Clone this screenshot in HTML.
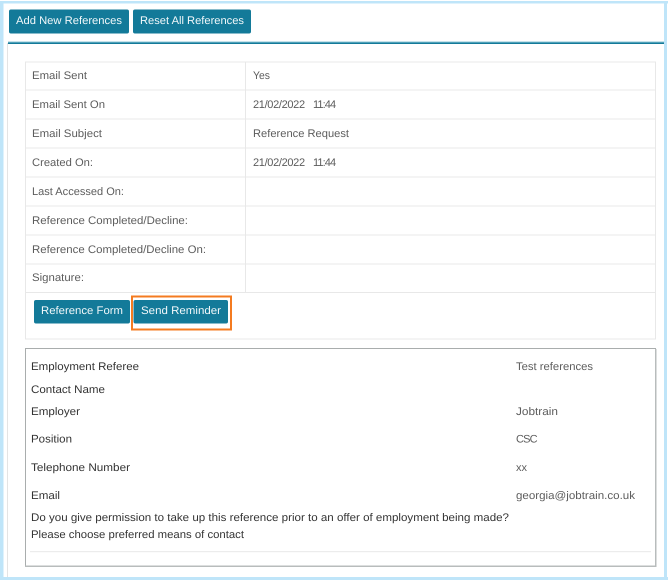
<!DOCTYPE html>
<html><head><meta charset="utf-8"><style>
html,body{margin:0;padding:0;background:#fff;width:668px;height:580px;overflow:hidden}
svg{display:block;filter:blur(.3px)}
text{font-family:"Liberation Sans",sans-serif;font-size:11px;text-rendering:geometricPrecision}
.l{fill:#5c5c5c}.d{fill:#333}.w{fill:#f2f8fa}
</style></head><body>
<svg width="668" height="580" viewBox="0 0 668 580" xmlns="http://www.w3.org/2000/svg">
<rect width="668" height="580" fill="#fff"/>
<rect x="0" y="1" width="3.5" height="579" fill="#bfe5f9"/>
<rect x="0" y="1" width="668" height="2.5" fill="#bfe5f9"/>
<rect x="664" y="1" width="3" height="579" fill="#bfe5f9"/>
<rect x="0" y="577" width="668" height="3" fill="#bfe5f9"/>
<rect x="7" y="43" width="1" height="534" fill="#e4e4e4"/>
<rect x="8" y="41.5" width="656" height="1" fill="#8cc6d6"/>
<rect x="8" y="42.5" width="656" height="1.5" fill="#137a99"/>

<rect x="9" y="9.5" width="120" height="24" rx="2" fill="#137a99"/>
<rect x="133" y="9.5" width="118" height="24" rx="2" fill="#137a99"/>
<text class="w" x="16" y="24" textLength="106" lengthAdjust="spacingAndGlyphs">Add New References</text>
<text class="w" x="140" y="24" textLength="104" lengthAdjust="spacingAndGlyphs">Reset All References</text>

<g fill="none" stroke="#e8e8e8" stroke-width="1">
<rect x="25.5" y="62" width="630" height="277"/>
<path d="M245.5 62V292.5M26 90H655M26 119H655M26 148H655M26 177H655M26 206H655M26 235H655M26 264H655M26 292.5H655"/>
</g>

<text class="l" x="32" y="79" textLength="55" lengthAdjust="spacingAndGlyphs">Email Sent</text>
<text class="l" x="253" y="79" textLength="17" lengthAdjust="spacingAndGlyphs">Yes</text>
<text class="l" x="32" y="108" textLength="73" lengthAdjust="spacingAndGlyphs">Email Sent On</text>
<text class="l" x="253" y="108" letter-spacing="-0.33">21/02/2022</text>
<text class="l" x="313" y="108" letter-spacing="-0.9">11:44</text>
<text class="l" x="32" y="137" textLength="70" lengthAdjust="spacingAndGlyphs">Email Subject</text>
<text class="l" x="253" y="137" textLength="96" lengthAdjust="spacingAndGlyphs">Reference Request</text>
<text class="l" x="32" y="166" textLength="61" lengthAdjust="spacingAndGlyphs">Created On:</text>
<text class="l" x="253" y="166" letter-spacing="-0.33">21/02/2022</text>
<text class="l" x="313" y="166" letter-spacing="-0.9">11:44</text>
<text class="l" x="32" y="195" textLength="92" lengthAdjust="spacingAndGlyphs">Last Accessed On:</text>
<text class="l" x="32" y="224" textLength="156" lengthAdjust="spacingAndGlyphs">Reference Completed/Decline:</text>
<text class="l" x="32" y="253" textLength="174" lengthAdjust="spacingAndGlyphs">Reference Completed/Decline On:</text>
<text class="l" x="32" y="281" textLength="52" lengthAdjust="spacingAndGlyphs">Signature:</text>

<rect x="34" y="300" width="96" height="23.5" rx="2" fill="#137a99"/>
<rect x="133.5" y="300" width="94.5" height="23.5" rx="2" fill="#137a99"/>
<rect x="132" y="296.5" width="99" height="33" fill="none" stroke="#f47b20" stroke-width="2"/>
<text class="w" x="41" y="314" textLength="82" lengthAdjust="spacingAndGlyphs">Reference Form</text>
<text class="w" x="141" y="314" textLength="80" lengthAdjust="spacingAndGlyphs">Send Reminder</text>

<rect x="25.5" y="348.5" width="630" height="217.5" fill="#fff" stroke="#a9adad" stroke-width="1"/>
<rect x="655" y="349" width="1.5" height="218" fill="#b8bcbc"/>
<rect x="25" y="565.5" width="631.5" height="1.5" fill="#b8bcbc"/>
<text class="d" x="31" y="370" textLength="108" lengthAdjust="spacingAndGlyphs">Employment Referee</text>
<text class="d" x="31" y="393" textLength="74" lengthAdjust="spacingAndGlyphs">Contact Name</text>
<text class="d" x="31" y="415" textLength="49" lengthAdjust="spacingAndGlyphs">Employer</text>
<text class="d" x="31" y="442.5" textLength="41" lengthAdjust="spacingAndGlyphs">Position</text>
<text class="d" x="31" y="471" textLength="99" lengthAdjust="spacingAndGlyphs">Telephone Number</text>
<text class="d" x="31" y="499" textLength="29" lengthAdjust="spacingAndGlyphs">Email</text>
<text class="d" x="31" y="521" textLength="478" lengthAdjust="spacingAndGlyphs">Do you give permission to take up this reference prior to an offer of employment being made?</text>
<text class="d" x="31" y="538" textLength="213" lengthAdjust="spacingAndGlyphs">Please choose preferred means of contact</text>

<text class="l" x="516" y="370" textLength="77" lengthAdjust="spacingAndGlyphs">Test references</text>
<text class="l" x="516" y="415" textLength="42" lengthAdjust="spacingAndGlyphs">Jobtrain</text>
<text class="l" x="516" y="442.5" letter-spacing="-0.8">CSC</text>
<text class="l" x="516" y="471" textLength="11" lengthAdjust="spacingAndGlyphs">xx</text>
<text class="l" x="516" y="499" textLength="119" lengthAdjust="spacingAndGlyphs">georgia@jobtrain.co.uk</text>

<rect x="30" y="551" width="621" height="1.2" fill="#ececec"/>
</svg>
</body></html>
